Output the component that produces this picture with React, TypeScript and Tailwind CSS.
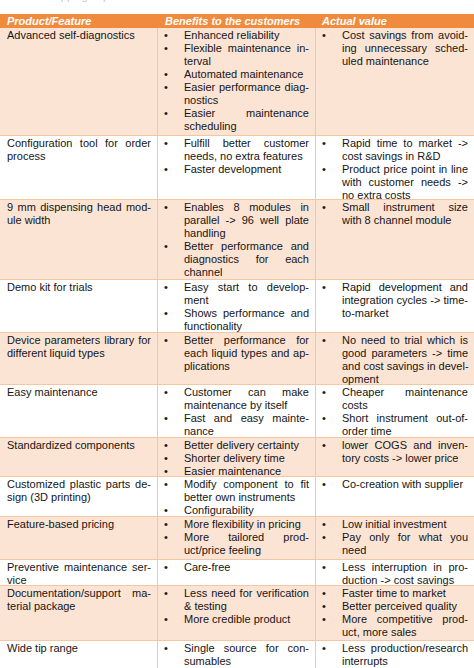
type Row = {
  bg: string;
  h: string;
  feature: string[];
  benefits: string[][];
  value: string[][];
};

const peach = "bg-[#fce4d4]";
const white = "bg-white";

const rows: Row[] = [
  {
    bg: peach,
    h: "h-[108px]",
    feature: ["Advanced self-diagnostics"],
    benefits: [
      ["Enhanced reliability"],
      ["Flexible maintenance in-", "terval"],
      ["Automated maintenance"],
      ["Easier performance diag-", "nostics"],
      ["Easier maintenance", "scheduling"],
    ],
    value: [["Cost savings from avoid-", "ing unnecessary sched-", "uled maintenance"]],
  },
  {
    bg: white,
    h: "h-[64px]",
    feature: ["Configuration tool for order", "process"],
    benefits: [["Fulfill better customer", "needs, no extra features"], ["Faster development"]],
    value: [
      ["Rapid time to market ->", "cost savings in R&D"],
      ["Product price point in line", "with customer needs ->", "no extra costs"],
    ],
  },
  {
    bg: peach,
    h: "h-[80px]",
    feature: ["9 mm dispensing head mod-", "ule width"],
    benefits: [
      ["Enables 8 modules in", "parallel -> 96 well plate", "handling"],
      ["Better performance and", "diagnostics for each", "channel"],
    ],
    value: [["Small instrument size", "with 8 channel module"]],
  },
  {
    bg: white,
    h: "h-[53px]",
    feature: ["Demo kit for trials"],
    benefits: [["Easy start to develop-", "ment"], ["Shows performance and", "functionality"]],
    value: [["Rapid development and", "integration cycles -> time-", "to-market"]],
  },
  {
    bg: peach,
    h: "h-[52px]",
    feature: ["Device parameters library for", "different liquid types"],
    benefits: [["Better performance for", "each liquid types and ap-", "plications"]],
    value: [["No need to trial which is", "good parameters -> time", "and cost savings in devel-", "opment"]],
  },
  {
    bg: white,
    h: "h-[53px]",
    feature: ["Easy maintenance"],
    benefits: [["Customer can make", "maintenance by itself"], ["Fast and easy mainte-", "nance"]],
    value: [["Cheaper maintenance", "costs"], ["Short instrument out-of-", "order time"]],
  },
  {
    bg: peach,
    h: "h-[39px]",
    feature: ["Standardized components"],
    benefits: [["Better delivery certainty"], ["Shorter delivery time"], ["Easier maintenance"]],
    value: [["lower COGS and inven-", "tory costs -> lower price"]],
  },
  {
    bg: white,
    h: "h-[40px]",
    feature: ["Customized plastic parts de-", "sign (3D printing)"],
    benefits: [["Modify component to fit", "better own instruments"], ["Configurability"]],
    value: [["Co-creation with supplier"]],
  },
  {
    bg: peach,
    h: "h-[43px]",
    feature: ["Feature-based pricing"],
    benefits: [["More flexibility in pricing"], ["More tailored prod-", "uct/price feeling"]],
    value: [["Low initial investment"], ["Pay only for what you", "need"]],
  },
  {
    bg: white,
    h: "h-[26px]",
    feature: ["Preventive maintenance ser-", "vice"],
    benefits: [["Care-free"]],
    value: [["Less interruption in pro-", "duction -> cost savings"]],
  },
  {
    bg: peach,
    h: "h-[55px]",
    feature: ["Documentation/support ma-", "terial package"],
    benefits: [["Less need for verification", "& testing"], ["More credible product"]],
    value: [["Faster time to market"], ["Better perceived quality"], ["More competitive prod-", "uct, more sales"]],
  },
  {
    bg: white,
    h: "h-[40px]",
    feature: ["Wide tip range"],
    benefits: [["Single source for con-", "sumables"]],
    value: [["Less production/research", "interrupts"]],
  },
];

// every line but the last one of a paragraph is stretched, like justified print
const Lines = ({ lines }: { lines: string[] }) => (
  <>
    {lines.map((line, i) => (
      <span
        key={i}
        className={
          i < lines.length - 1
            ? "block whitespace-nowrap text-justify [text-align-last:justify]"
            : "block whitespace-nowrap"
        }
      >
        {line}
      </span>
    ))}
  </>
);

const Bullets = ({ items }: { items: string[][] }) => (
  <div className="pl-[6px] pr-[6px] pt-px">
    {items.map((item, i) => (
      <div key={i} className="flex">
        <span className="w-[20px] shrink-0">•</span>
        <div className="flex-1 min-w-0">
          <Lines lines={item} />
        </div>
      </div>
    ))}
  </div>
);

export default function App() {
  return (
    <div className="w-[474px] h-[668px] overflow-hidden bg-white font-['Liberation_Sans',Arial,sans-serif] text-[11px] leading-[13px] text-[#151515]">
      <div className="h-[14px]">
        <div className="h-[4px] overflow-hidden pl-[7px] text-[#b9c4cf]">
          <p className="-mt-[10px] whitespace-nowrap">Table 3 Mapping of product features to values</p>
        </div>
      </div>

      <div className="grid grid-cols-[158px_158px_158px] h-[14px] bg-[#f08b3e] font-bold italic text-white leading-[14px]">
        <div className="pl-[7px]">Product/Feature</div>
        <div className="pl-[7px]">Benefits to the customers</div>
        <div className="pl-[6px]">Actual value</div>
      </div>

      {rows.map((row, i) => (
        <div
          key={i}
          className={`grid grid-cols-[158px_158px_158px] border-b border-[#f3c6a4] ${row.bg} ${row.h}`}
        >
          <div className="border-r border-[#f3c6a4] pl-[7px] pr-[6px] pt-px">
            <Lines lines={row.feature} />
          </div>
          <div className="border-r border-[#f3c6a4]">
            <Bullets items={row.benefits} />
          </div>
          <div>
            <Bullets items={row.value} />
          </div>
        </div>
      ))}
    </div>
  );
}
